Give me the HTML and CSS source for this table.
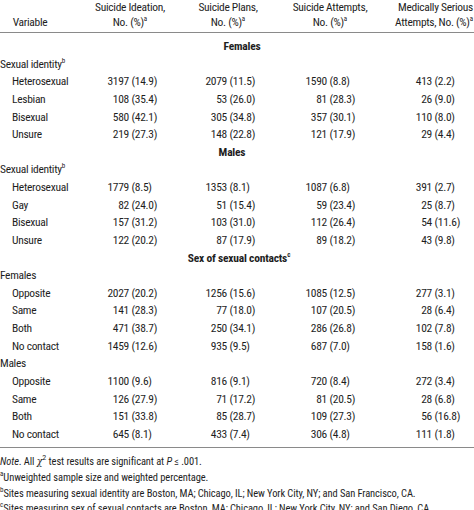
FILE: index.html
```html
<!DOCTYPE html>
<html>
<head>
<meta charset="utf-8">
<link rel="stylesheet" href="styles.css">
</head>
<body>
<div class="page">
  <div class="head">
    <div class="hc hv"><div>Variable</div></div>
    <div class="hc"><div>Suicide Ideation,</div><div>No. (%)<sup>a</sup></div></div>
    <div class="hc"><div>Suicide Plans,</div><div>No. (%)<sup>a</sup></div></div>
    <div class="hc"><div>Suicide Attempts,</div><div>No. (%)<sup>a</sup></div></div>
    <div class="hc hr"><div>Medically Serious</div><div>Attempts, No. (%)<sup>a</sup></div></div>
  </div>
  <div class="body">
    <div class="row sec sec-f">Females</div>
    <div class="row"><div class="grp">Sexual identity<sup>b</sup></div></div>
    <div class="row"><div class="lab">Heterosexual</div><div class="c"><span class="n">3197</span><span class="p">(14.9)</span></div><div class="c"><span class="n">2079</span><span class="p">(11.5)</span></div><div class="c"><span class="n">1590</span><span class="p">(8.8)</span></div><div class="c"><span class="n">413</span><span class="p">(2.2)</span></div></div>
    <div class="row"><div class="lab">Lesbian</div><div class="c"><span class="n">108</span><span class="p">(35.4)</span></div><div class="c"><span class="n">53</span><span class="p">(26.0)</span></div><div class="c"><span class="n">81</span><span class="p">(28.3)</span></div><div class="c"><span class="n">26</span><span class="p">(9.0)</span></div></div>
    <div class="row"><div class="lab">Bisexual</div><div class="c"><span class="n">580</span><span class="p">(42.1)</span></div><div class="c"><span class="n">305</span><span class="p">(34.8)</span></div><div class="c"><span class="n">357</span><span class="p">(30.1)</span></div><div class="c"><span class="n">110</span><span class="p">(8.0)</span></div></div>
    <div class="row"><div class="lab">Unsure</div><div class="c"><span class="n">219</span><span class="p">(27.3)</span></div><div class="c"><span class="n">148</span><span class="p">(22.8)</span></div><div class="c"><span class="n">121</span><span class="p">(17.9)</span></div><div class="c"><span class="n">29</span><span class="p">(4.4)</span></div></div>
    <div class="row sec sec-m">Males</div>
    <div class="row"><div class="grp">Sexual identity<sup>b</sup></div></div>
    <div class="row"><div class="lab">Heterosexual</div><div class="c"><span class="n">1779</span><span class="p">(8.5)</span></div><div class="c"><span class="n">1353</span><span class="p">(8.1)</span></div><div class="c"><span class="n">1087</span><span class="p">(6.8)</span></div><div class="c"><span class="n">391</span><span class="p">(2.7)</span></div></div>
    <div class="row"><div class="lab">Gay</div><div class="c"><span class="n">82</span><span class="p">(24.0)</span></div><div class="c"><span class="n">51</span><span class="p">(15.4)</span></div><div class="c"><span class="n">59</span><span class="p">(23.4)</span></div><div class="c"><span class="n">25</span><span class="p">(8.7)</span></div></div>
    <div class="row"><div class="lab">Bisexual</div><div class="c"><span class="n">157</span><span class="p">(31.2)</span></div><div class="c"><span class="n">103</span><span class="p">(31.0)</span></div><div class="c"><span class="n">112</span><span class="p">(26.4)</span></div><div class="c"><span class="n">54</span><span class="p">(11.6)</span></div></div>
    <div class="row"><div class="lab">Unsure</div><div class="c"><span class="n">122</span><span class="p">(20.2)</span></div><div class="c"><span class="n">87</span><span class="p">(17.9)</span></div><div class="c"><span class="n">89</span><span class="p">(18.2)</span></div><div class="c"><span class="n">43</span><span class="p">(9.8)</span></div></div>
    <div class="row sec sec-s">Sex of sexual contacts<sup>c</sup></div>
    <div class="row"><div class="grp">Females</div></div>
    <div class="row"><div class="lab">Opposite</div><div class="c"><span class="n">2027</span><span class="p">(20.2)</span></div><div class="c"><span class="n">1256</span><span class="p">(15.6)</span></div><div class="c"><span class="n">1085</span><span class="p">(12.5)</span></div><div class="c"><span class="n">277</span><span class="p">(3.1)</span></div></div>
    <div class="row"><div class="lab">Same</div><div class="c"><span class="n">141</span><span class="p">(28.3)</span></div><div class="c"><span class="n">77</span><span class="p">(18.0)</span></div><div class="c"><span class="n">107</span><span class="p">(20.5)</span></div><div class="c"><span class="n">28</span><span class="p">(6.4)</span></div></div>
    <div class="row"><div class="lab">Both</div><div class="c"><span class="n">471</span><span class="p">(38.7)</span></div><div class="c"><span class="n">250</span><span class="p">(34.1)</span></div><div class="c"><span class="n">286</span><span class="p">(26.8)</span></div><div class="c"><span class="n">102</span><span class="p">(7.8)</span></div></div>
    <div class="row"><div class="lab">No contact</div><div class="c"><span class="n">1459</span><span class="p">(12.6)</span></div><div class="c"><span class="n">935</span><span class="p">(9.5)</span></div><div class="c"><span class="n">687</span><span class="p">(7.0)</span></div><div class="c"><span class="n">158</span><span class="p">(1.6)</span></div></div>
    <div class="row"><div class="grp">Males</div></div>
    <div class="row"><div class="lab">Opposite</div><div class="c"><span class="n">1100</span><span class="p">(9.6)</span></div><div class="c"><span class="n">816</span><span class="p">(9.1)</span></div><div class="c"><span class="n">720</span><span class="p">(8.4)</span></div><div class="c"><span class="n">272</span><span class="p">(3.4)</span></div></div>
    <div class="row"><div class="lab">Same</div><div class="c"><span class="n">126</span><span class="p">(27.9)</span></div><div class="c"><span class="n">71</span><span class="p">(17.2)</span></div><div class="c"><span class="n">81</span><span class="p">(20.5)</span></div><div class="c"><span class="n">28</span><span class="p">(6.8)</span></div></div>
    <div class="row"><div class="lab">Both</div><div class="c"><span class="n">151</span><span class="p">(33.8)</span></div><div class="c"><span class="n">85</span><span class="p">(28.7)</span></div><div class="c"><span class="n">109</span><span class="p">(27.3)</span></div><div class="c"><span class="n">56</span><span class="p">(16.8)</span></div></div>
    <div class="row"><div class="lab">No contact</div><div class="c"><span class="n">645</span><span class="p">(8.1)</span></div><div class="c"><span class="n">433</span><span class="p">(7.4)</span></div><div class="c"><span class="n">306</span><span class="p">(4.8)</span></div><div class="c"><span class="n">111</span><span class="p">(1.8)</span></div></div>
  </div>
  <div class="notes">
    <div class="note"><i>Note</i>. All <span class="chi">χ</span><sup class="sq">2</sup> test results are significant at <i>P</i> ≤ .001.</div>
    <div class="note"><sup>a</sup>Unweighted sample size and weighted percentage.</div>
    <div class="note"><sup>b</sup>Sites measuring sexual identity are Boston, MA; Chicago, IL; New York City, NY; and San Francisco, CA.</div>
    <div class="note"><sup>c</sup>Sites measuring sex of sexual contacts are Boston, MA; Chicago, IL; New York City, NY; and San Diego, CA.</div>
  </div>
</div>
</body>
</html>
```
FILE: styles.css
```css
html, body {
  margin: 0;
  padding: 0;
  background: #fff;
  overflow: hidden;
}
.page {
  width: 474px;
  height: 510px;
  overflow: hidden;
  font-family: "Roboto", "Liberation Sans", Arial, sans-serif;
  font-stretch: condensed;
  font-size: 11.5px;
  letter-spacing: -0.3px;
  color: #1e1e1e;
}
sup {
  font-size: 7px;
  line-height: 0;
  vertical-align: 5px;
  letter-spacing: 0;
}
.head {
  display: grid;
  grid-template-columns: 60px 140px 56px 148px 70px;
  height: 32px;
  border-bottom: 1px solid #8a8a8a;
  line-height: 15px;
}
.hc {
  display: flex;
  flex-direction: column;
  align-items: center;
  text-align: center;
  white-space: nowrap;
}
.hv {
  justify-content: flex-end;
  padding-bottom: 2px;
}
.hr {
  align-items: flex-end;
  padding-right: 1px;
}
.body {
  padding-top: 5px;
  padding-bottom: 4px;
  border-bottom: 1px solid #8a8a8a;
}
.row {
  display: grid;
  grid-template-columns: 73px 98px 100px 105px 1fr;
  height: 17.64px;
  line-height: 17.64px;
  white-space: nowrap;
}
.row.sec {
  display: block;
  text-align: center;
  font-weight: bold;
  letter-spacing: -0.2px;
}
.sec-f {
  padding-left: 10px;
}
.sec-m {
  padding-right: 10px;
}
.sec-s {
  padding-left: 4px;
}
.grp {
  grid-column: 1 / 3;
}
.lab {
  padding-left: 12px;
}
.c {
  display: flex;
}
.n {
  width: 56px;
  text-align: right;
}
.p {
  margin-left: 2.5px;
}
.notes {
  padding-top: 6px;
  font-size: 10.5px;
  letter-spacing: -0.1px;
  line-height: 15.7px;
}
.note {
  white-space: nowrap;
}
.chi {
  font-family: "DejaVu Serif", serif;
  font-style: italic;
}
.sq {
  font-size: 8px;
}
```
